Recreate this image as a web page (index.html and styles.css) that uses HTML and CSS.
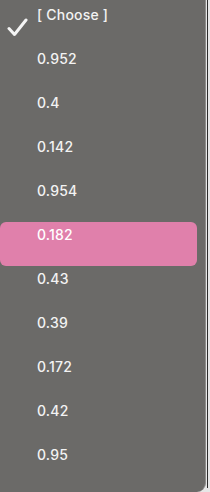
FILE: index.html
```html
<!DOCTYPE html>
<html lang="en">
<head>
  <meta charset="UTF-8">
  <meta name="viewport" content="width=device-width, initial-scale=1.0">
  <title>Choose value</title>
  <link rel="stylesheet" href="styles.css">
</head>
<body>
  <div class="screen">
    <ul class="menu">
      <li class="item checked">
        <svg class="check" width="21" height="19" viewBox="0 0 21 19">
          <path d="M2 10.5 L7.5 16.5 L19 2" fill="none" stroke="#f4f4f4" stroke-width="3" stroke-linecap="round" stroke-linejoin="round"/>
        </svg>
        <span class="label">[ Choose ]</span>
      </li>
      <li class="item"><span class="label">0.952</span></li>
      <li class="item"><span class="label">0.4</span></li>
      <li class="item"><span class="label">0.142</span></li>
      <li class="item"><span class="label">0.954</span></li>
      <li class="item selected"><span class="label">0.182</span></li>
      <li class="item"><span class="label">0.43</span></li>
      <li class="item"><span class="label">0.39</span></li>
      <li class="item"><span class="label">0.172</span></li>
      <li class="item"><span class="label">0.42</span></li>
      <li class="item"><span class="label">0.95</span></li>
    </ul>
    <div class="edge"></div>
  </div>
</body>
</html>
```

FILE: styles.css
```css
html, body {
  margin: 0;
  padding: 0;
  overflow: hidden;
}

body {
  background-color: #e6e6e6;
  font-family: "Inter", "Liberation Sans", sans-serif;
}

.screen {
  display: flex;
  height: 492px;
}

.menu {
  list-style: none;
  margin: 0;
  padding: 2px 0 0 0;
  width: 206px;
  height: 492px;
  box-sizing: border-box;
  background-color: #6b6a68;
  border-right: 1.5px solid #8f8e8c;
  border-bottom-right-radius: 9px;
  display: flex;
  flex-direction: column;
}

.item {
  position: relative;
  height: 44px;
  margin-right: 8px;
  padding: 4px 0 0 37px;
  box-sizing: border-box;
  border-radius: 6px;
  color: #f3f3f3;
  font-size: 14px;
  font-weight: 500;
  line-height: 18px;
  letter-spacing: 0.2px;
}

.selected {
  background-color: #e080ab;
  color: #ffffff;
}

.check {
  position: absolute;
  left: 6.5px;
  top: 15.5px;
}

.edge {
  width: 1px;
  height: 488px;
  background-color: #2c2c2c;
  margin-left: 0.5px;
}
```
